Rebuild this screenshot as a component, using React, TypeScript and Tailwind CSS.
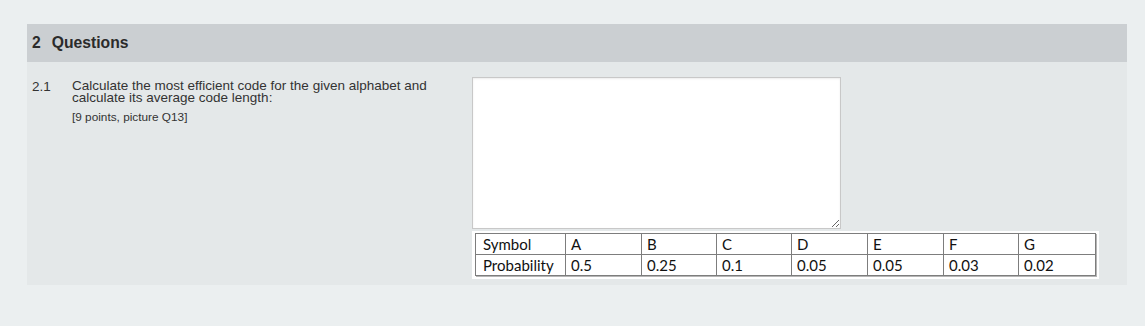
const symbols = ["A", "B", "C", "D", "E", "F", "G"];
const probs = ["0.5", "0.25", "0.1", "0.05", "0.05", "0.03", "0.02"];
const colW = ["w-[76px]", "w-[75px]", "w-[75px]", "w-[76px]", "w-[76px]", "w-[75px]", "w-[77px]"];

export default function App() {
  return (
    <div className="min-h-[326px] w-full bg-[#ebeff0] pt-6 px-[27px] pb-10 font-['Liberation_Sans',Arial,sans-serif] text-[#333]">
      <div className="w-[1100px]">
        {/* Section header */}
        <div className="h-[38px] bg-[#cbcfd2] flex items-center pl-[5px]">
          <h2 className="text-[15.7px] font-bold text-[#2b2b2b] flex gap-[11px]">
            <span>2</span>
            <span>Questions</span>
          </h2>
        </div>

        {/* Question body */}
        <div className="bg-[#e4e8e9] pt-[15px] pb-[6px] pl-[5px] flex">
          <div className="w-[40px] text-[13.5px] leading-[14px] pt-[3px]">2.1</div>
          <div className="w-[380px] pt-[3px]">
            <p className="text-[13.5px] leading-[12px]">
              Calculate the most efficient code for the given alphabet and calculate its average code length:
            </p>
            <p className="text-[11.8px] leading-[13px] mt-[7px]">[9 points, picture Q13]</p>
          </div>
          <div className="ml-[20px] flex flex-col">
            <textarea className="w-[369px] h-[152px] bg-white border border-[#c8c8c8] shadow-[inset_0_1px_2px_rgba(0,0,0,0.08)] outline-none resize" />
            <div className="mt-[2px] w-[627px] bg-white px-[3px] pt-[2px] pb-[3px]">
              <table className="border-collapse border border-[#8a8a8a] shadow-[1px_1px_0_#b5b5b5] font-['Lato','Open_Sans',sans-serif] text-[15px] text-[#111]">
                <tbody>
                  <tr className="h-[21px]">
                    <td className="w-[90px] border border-[#7d7d7d] px-[7px] leading-[18px]">Symbol</td>
                    {symbols.map((s, i) => (
                      <td key={s} className={`${colW[i]} border border-[#7d7d7d] px-[5px] leading-[18px]`}>
                        {s}
                      </td>
                    ))}
                  </tr>
                  <tr className="h-[21px]">
                    <td className="w-[90px] border border-[#7d7d7d] px-[7px] leading-[18px]">Probability</td>
                    {probs.map((p, i) => (
                      <td key={i} className={`${colW[i]} border border-[#7d7d7d] px-[5px] leading-[18px]`}>
                        {p}
                      </td>
                    ))}
                  </tr>
                </tbody>
              </table>
            </div>
          </div>
        </div>
      </div>
    </div>
  );
}
